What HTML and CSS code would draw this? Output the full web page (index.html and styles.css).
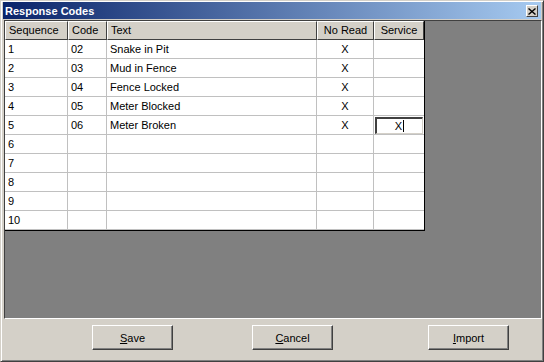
FILE: index.html
```html
<!DOCTYPE html>
<html lang="en">
  <head>
    <meta charset="UTF-8" />
    <title>Response Codes</title>
    <link rel="stylesheet" href="styles.css">
  </head>
  <body>
    <div class="window">
      <div class="titlebar">
        <span class="title">Response Codes</span>
        <span class="close">
          <svg width="8" height="7" viewBox="0 0 8 7"><path d="M0.5 0.5 L7.5 6.5 M7.5 0.5 L0.5 6.5" stroke="#000" stroke-width="1.4"/></svg>
        </span>
      </div>
      <div class="client">
        <div class="grid">
          <div class="hd">Sequence</div>
          <div class="hd">Code</div>
          <div class="hd">Text</div>
          <div class="hd center">No Read</div>
          <div class="hd center">Service</div>

          <div class="cell">1</div><div class="cell">02</div><div class="cell">Snake in Pit</div><div class="cell center">X</div><div class="cell"></div>
          <div class="cell">2</div><div class="cell">03</div><div class="cell">Mud in Fence</div><div class="cell center">X</div><div class="cell"></div>
          <div class="cell">3</div><div class="cell">04</div><div class="cell">Fence Locked</div><div class="cell center">X</div><div class="cell"></div>
          <div class="cell">4</div><div class="cell">05</div><div class="cell">Meter Blocked</div><div class="cell center">X</div><div class="cell"></div>
          <div class="cell">5</div><div class="cell">06</div><div class="cell">Meter Broken</div><div class="cell center">X</div>
          <div class="cell edit-cell"><span class="editor">X<span class="caret"></span></span></div>
          <div class="cell">6</div><div class="cell"></div><div class="cell"></div><div class="cell"></div><div class="cell"></div>
          <div class="cell">7</div><div class="cell"></div><div class="cell"></div><div class="cell"></div><div class="cell"></div>
          <div class="cell">8</div><div class="cell"></div><div class="cell"></div><div class="cell"></div><div class="cell"></div>
          <div class="cell">9</div><div class="cell"></div><div class="cell"></div><div class="cell"></div><div class="cell"></div>
          <div class="cell">10</div><div class="cell"></div><div class="cell"></div><div class="cell"></div><div class="cell"></div>
        </div>
      </div>
      <div class="buttons">
        <button class="btn btn-save"><u>S</u>ave</button>
        <button class="btn btn-cancel"><u>C</u>ancel</button>
        <button class="btn btn-import"><u>I</u>mport</button>
      </div>
    </div>
  </body>
</html>
```

FILE: styles.css
```css
* {
  box-sizing: border-box;
}

body {
  margin: 0;
  font-family: "Liberation Sans", Arial, sans-serif;
  font-size: 11px;
  background-color: #d4d0c8;
}

.window {
  width: 544px;
  height: 362px;
  background-color: #d4d0c8;
  border-top: 1px solid #d4d0c8;
  border-left: 1px solid #d4d0c8;
  border-right: 1px solid #404040;
  border-bottom: 1px solid #404040;
  box-shadow: inset 1px 1px 0 #ffffff, inset -1px -1px 0 #808080;
  padding: 1px 1px 2px 2px;
  display: flex;
  flex-direction: column;
}

.titlebar {
  height: 17px;
  margin-right: 1px;
  background: linear-gradient(to right, #0a246a, #a6caf0);
  display: flex;
  align-items: center;
  justify-content: space-between;
  padding: 0 3px 0 2px;
}

.title {
  color: #ffffff;
  font-weight: bold;
  font-size: 11px;
}

.close {
  width: 12px;
  height: 12px;
  margin-top: 1px;
  background-color: #d4d0c8;
  border-top: 1px solid #ffffff;
  border-left: 1px solid #ffffff;
  border-right: 1px solid #404040;
  border-bottom: 1px solid #404040;
  display: flex;
  align-items: center;
  justify-content: center;
}

.client {
  height: 299px;
  margin: 1px 0 0 1px;
  background-color: #808080;
  border-top: 1px solid #404040;
  border-left: 1px solid #404040;
  border-right: 1px solid #ffffff;
  border-bottom: 1px solid #ffffff;
}

.grid {
  display: grid;
  grid-template-columns: 63px 39px 210px 57px 50px;
  width: 420px;
  background-color: #ffffff;
  border-right: 1px solid #000000;
  border-bottom: 1px solid #000000;
}

.hd {
  height: 19px;
  line-height: 17px;
  padding-left: 3px;
  background-color: #d4d0c8;
  border-top: 1px solid #ffffff;
  border-left: 1px solid #ffffff;
  border-right: 1px solid #404040;
  border-bottom: 1px solid #404040;
  white-space: nowrap;
}

.cell {
  height: 19px;
  line-height: 18px;
  padding-left: 3px;
  border-right: 1px solid #c0c0c0;
  border-bottom: 1px solid #c0c0c0;
  white-space: nowrap;
}

.grid .cell:nth-child(5n) {
  border-right: none;
}

.cell.center,
.hd.center {
  text-align: center;
  padding-left: 0;
}

.edit-cell {
  padding: 0 1px 0 1px;
}

.editor {
  display: block;
  height: 17px;
  margin-top: 1px;
  line-height: 14px;
  text-align: center;
  background-color: #ffffff;
  border-top: 2px solid #404040;
  border-left: 2px solid #404040;
  border-right: 1px solid #d4d0c8;
  border-bottom: 1px solid #d4d0c8;
}

.caret {
  display: inline-block;
  width: 1px;
  height: 12px;
  margin-left: 1px;
  vertical-align: -2px;
  background-color: #000000;
}

.buttons {
  flex: 1;
  display: flex;
  align-items: flex-start;
  padding-top: 6px;
}

.btn {
  width: 81px;
  height: 25px;
  font-family: "Liberation Sans", Arial, sans-serif;
  font-size: 11px;
  color: #000000;
  background-color: #d4d0c8;
  border-top: 1px solid #ffffff;
  border-left: 1px solid #ffffff;
  border-right: 1px solid #404040;
  border-bottom: 1px solid #404040;
  box-shadow: inset -1px -1px 0 #808080;
  padding: 0;
}

.btn-save {
  margin-left: 89px;
}

.btn-cancel {
  margin-left: 79px;
}

.btn-import {
  margin-left: 95px;
}
```
